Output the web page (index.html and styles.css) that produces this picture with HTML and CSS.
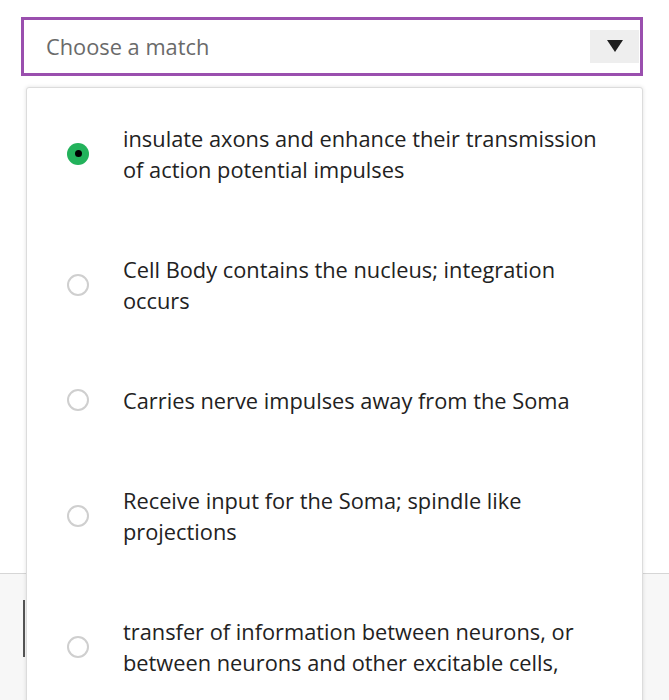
FILE: index.html
```html
<!DOCTYPE html>
<html>
<head>
<meta charset="utf-8">
<link rel="stylesheet" href="styles.css">
</head>
<body>
<div class="page">
  <div class="select">
    <span class="placeholder">Choose a match</span>
    <span class="arrow"><svg width="16" height="12" viewBox="0 0 16 12"><path d="M0 0H16L8 12Z" fill="#1f1f1f"/></svg></span>
  </div>
  <div class="behind">
    <div class="behind-bar"></div>
  </div>
  <ul class="menu">
    <li class="option"><span class="radio checked"></span><span class="label">insulate axons and enhance their transmission of action potential impulses</span></li>
    <li class="option"><span class="radio"></span><span class="label">Cell Body contains the nucleus; integration occurs</span></li>
    <li class="option"><span class="radio"></span><span class="label">Carries nerve impulses away from the Soma</span></li>
    <li class="option"><span class="radio"></span><span class="label">Receive input for the Soma; spindle like projections</span></li>
    <li class="option"><span class="radio"></span><span class="label">transfer of information between neurons, or between neurons and other excitable cells,</span></li>
  </ul>
</div>
</body>
</html>
```

FILE: styles.css
```css
html, body {
  margin: 0;
  padding: 0;
  background: #ffffff;
  font-family: "Open Sans", "Noto Sans", sans-serif;
  overflow: hidden;
}
.page {
  position: relative;
  width: 669px;
  height: 700px;
  padding-top: 17px;
  box-sizing: border-box;
}
.select {
  margin-left: 21px;
  width: 622px;
  height: 59px;
  box-sizing: border-box;
  border: 3px solid #9a4fae;
  background: #fff;
  display: flex;
  align-items: center;
  justify-content: space-between;
  padding-left: 22px;
  padding-right: 1px;
  padding-bottom: 1px;
}
.placeholder {
  font-size: 21.8px;
  color: #6a6a6a;
}
.arrow {
  width: 49px;
  height: 33px;
  background: #eeeeee;
  display: flex;
  align-items: center;
  justify-content: center;
}
.arrow svg { display: block; }
.behind {
  margin-top: 497px;
  height: 127px;
  border-top: 1px solid #d6d6d6;
  background: #f7f7f7;
  position: relative;
}
.behind-bar {
  margin-left: 23px;
  margin-top: 26px;
  width: 2px;
  height: 57px;
  background: #555;
}
.menu {
  position: absolute;
  left: 26px;
  top: 87px;
  width: 617px;
  height: 640px;
  margin: 0;
  padding: 0;
  list-style: none;
  background: #fff;
  border: 1px solid #dcdcdc;
  border-radius: 3px;
  box-shadow: 0 0 4px rgba(0,0,0,0.12);
  box-sizing: border-box;
}
.option {
  display: flex;
  align-items: center;
  padding: 34.5px 30px 34.5px 40px;
}
.radio {
  flex: none;
  width: 22px;
  height: 22px;
  border-radius: 50%;
  box-sizing: border-box;
  border: 2px solid #cfcfcf;
  background: #fff;
  margin-right: 34px;
  position: relative;
}
.radio.checked {
  border: none;
  background: #22b25b;
}
.radio.checked::after {
  content: "";
  position: absolute;
  left: 7.5px;
  top: 7.5px;
  width: 7px;
  height: 7px;
  border-radius: 50%;
  background: #000;
}
.label {
  font-size: 21.8px;
  line-height: 31px;
  color: #222;
}
```
